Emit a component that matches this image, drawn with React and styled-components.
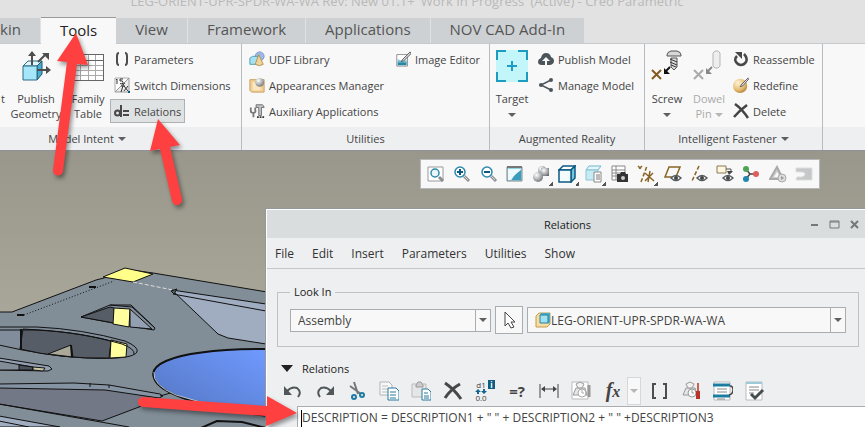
import React from "react";
import styled, { createGlobalStyle } from "styled-components";

const tabs = ["kin", "Tools", "View", "Framework", "Applications", "NOV CAD Add-In"];

const menus = ["File", "Edit", "Insert", "Parameters", "Utilities", "Show"];

const viewTools = [
  "refit",
  "zoomIn",
  "zoomOut",
  "repaint",
  "shading",
  "savedView",
  "viewManager",
  "camera",
  "datum",
  "plane",
  "axis",
  "annotation",
  "spin",
  "perspective",
  "section",
];

const withMenu = ["shading", "savedView", "viewManager", "datum"];

const editTools = ["undo", "redo", "cut", "copy", "paste", "remove", "switchDims", "evaluate", "dimension", "units"];

const lastTools = ["brackets", "unitCheck", "sort", "verify"];

const eye = (
  <g>
    <path d="M7 13q5-5 10 0q-5 5-10 0z" fill="#f8f8f8" stroke="#555b5f" strokeWidth="1.5" />
    <circle cx="12" cy="13" r="2" fill="#444" />
  </g>
);

const lens = (
  <g>
    <path d="M11 11l5 5" stroke="#8b8f92" strokeWidth="3" />
    <path d="M11 11l4 4" stroke="#d8dadb" />
    <circle cx="7" cy="7" r="5" fill="#fff" stroke="#2f8aa8" strokeWidth="1.5" />
  </g>
);

const balance = (color) => (
  <g>
    <path d="M2 14L5 7h9l2 7z" fill="#e6e7e8" stroke="#999" />
    <path d="M5 3l4-2 4 2-2 4H7z" fill="#f2f2f2" stroke="#999" />
    <circle cx="11" cy="12" r="4" fill="#fff" stroke={color} />
    <path d="M11 9v3h2" stroke={color} fill="none" />
  </g>
);

// every drawing keeps its own box, [width, height, shapes]
const icons = {
  publish: [
    32,
    32,
    <g>
      <path d="M3 16l5-5h14l-5 5z" fill="#dff6fd" stroke="#2d6d85" />
      <path d="M17 16l5-5v13l-5 6z" fill="#4aabd0" stroke="#1d566c" />
      <path d="M3 16h14v14H3z" fill="#a6e6fa" stroke="#2d6d85" />
      <path d="M12 15V5M18 12l7-7M17 20h11" stroke="#4d4d4d" strokeWidth="2" fill="none" />
      <path d="M8 6l4-5 4 5zM22 3h7v7zM26 16l5 4-5 4z" fill="#4d4d4d" />
    </g>,
  ],
  table: [
    32,
    32,
    <g shapeRendering="crispEdges">
      <path d="M1 4h30v26H1z" fill="#fff" stroke="#666" />
      <path d="M8 4v26M16 4v26M23 4v26M1 15h30M1 20h30M1 25h30" stroke="#aaa" />
      <path d="M1 4h30M1 10h30" stroke="#666" />
    </g>,
  ],
  params: [
    16,
    16,
    <path d="M5 2Q3 2 3 5v6q0 3 2 3M11 2q2 0 2 3v6q0 3-2 3" fill="none" stroke="#4d4d4d" strokeWidth="2" />,
  ],
  switch: [
    16,
    16,
    <g>
      <path d="M1 1h14L1 15z" fill="#fff" stroke="#aaa" />
      <path d="M15 1v14H1z" fill="#ececec" stroke="#999" />
      <path d="M2 3l1-1v5M9 2H6v2q3-1 3 1.500t-3 1" fill="none" stroke="#333" />
      <path d="M11 6q-2 0-2 3l-2 6M7 9h4M10 9l4 5M14 9l-4 5" fill="none" stroke="#333" />
      <path d="M14 14h2v2h-2z" fill="#0b5a83" />
    </g>,
  ],
  relations: [
    16,
    16,
    <g fill="none" stroke="#484848" strokeWidth="2">
      <circle cx="3.500" cy="10" r="2.500" />
      <path d="M7 2v12M9 8h6M9 12h6" />
    </g>,
  ],
  udf: [
    18,
    18,
    <g>
      <circle cx="12" cy="6" r="5" fill="#9fb9e8" stroke="#7590c7" />
      <path d="M1 8l3-2h7v7l-3 2H1z" fill="#a8e1ef" stroke="#3f9cb7" />
      <path d="M11 4l5 11q-4 3-9 0z" fill="#f0d49b" stroke="#b18f4c" />
    </g>,
  ],
  appearance: [
    18,
    18,
    <g>
      <path d="M1 3h16v14H3l-2-2z" fill="#f1d198" stroke="#c39a50" />
      <path d="M4 6h9v9H4z" fill="#fbe7bf" />
      <circle cx="12" cy="6" r="5" fill="url(#ball)" />
    </g>,
  ],
  auxiliary: [
    18,
    18,
    <g>
      <path d="M2 5v4q0 2 3 2t2-3V5M5 10v6" stroke="#777" strokeWidth="2" fill="none" />
      <path d="M8 2h7q2 1 2 3h-3v9h-3V5H8z" fill="#c3c6c8" stroke="#666" />
      <path d="M9 15h2v2H9zM12 15h2v2h-2zM15 15h2v2h-2z" fill="#333" />
    </g>,
  ],
  imageEditor: [
    18,
    18,
    <g>
      <path d="M2 4h12v13H2z" fill="#fff" stroke="#888" />
      <path d="M3 12q5-2 10 0v4H3z" fill="#2586a5" />
      <path d="M3 9q4 3 10 1v3H3z" fill="#7fc2d4" />
      <path d="M17 1l-8 8-2 3 3-1 8-8z" fill="#d7d7d7" stroke="#555" />
    </g>,
  ],
  target: [
    32,
    32,
    <g>
      <path d="M0 0h32v32H0z" fill="#c3f6fa" />
      <path
        d="M1 10V1h9M22 1h9v9M31 22v9h-9M10 31H1v-9M16 11v10M11 16h10"
        fill="none"
        stroke="#1b9cc0"
        strokeWidth="2"
      />
    </g>,
  ],
  cloud: [
    16,
    16,
    <g>
      <path d="M4 14q-4 0-4-3t3-4q1-5 5-5t5 4q3 1 3 4t-4 4z" fill="#4b555a" />
      <path d="M8 6l4 4H9v4H7v-4H4z" fill="#f8f8f8" />
    </g>,
  ],
  share: [
    16,
    16,
    <g fill="#4b555a">
      <path d="M13 3L3 8l10 5" fill="none" stroke="#4b555a" strokeWidth="1.5" />
      <circle cx="3" cy="8" r="2" />
      <circle cx="13" cy="3" r="2" />
      <circle cx="13" cy="13" r="2" />
    </g>,
  ],
  screw: [
    32,
    32,
    <g>
      <path d="M20 8h6v9l-3 3-3-3z" fill="#ddd" stroke="#555" />
      <path d="M19 9l7 3M19 12l7 3M20 15l5 2" stroke="#333" />
      <path d="M16 5q0-3 4-4h6q4 1 4 4v1H16z" fill="#d5d7d8" stroke="#555" />
      <path d="M1 20l9 9M10 20l-9 9" stroke="#845a22" strokeWidth="2" />
      <path d="M19 17l-4 4" stroke="#111" strokeWidth="2" />
      <path d="M13 18v6h6z" fill="#111" />
    </g>,
  ],
  dowel: [
    32,
    32,
    <g>
      <path d="M20 3l2-2h3l2 2v13l-2 2h-3l-2-2z" fill="#eee" stroke="#b5b5b5" />
      <path d="M1 20l9 9M10 20l-9 9" stroke="#aaa" strokeWidth="2" />
      <path d="M19 17l-4 4" stroke="#888" strokeWidth="2" />
      <path d="M13 18v6h6z" fill="#888" />
    </g>,
  ],
  reassemble: [
    16,
    16,
    <g>
      <path d="M4 5q-3 3-1 6 2 3 5 3t5-3q2-4-2-8" fill="none" stroke="#484848" strokeWidth="2.500" />
      <path d="M2 1h7v7z" fill="#484848" />
    </g>,
  ],
  redefine: [
    18,
    18,
    <g>
      <circle cx="8" cy="10" r="8" fill="url(#gold)" />
      <path d="M17 1l-7 7-2 3 3-1 7-8z" fill="#e3e3e3" stroke="#555" />
    </g>,
  ],
  delete: [
    16,
    16,
    <path d="M2 1q7 5 13 14M14 2Q6 8 1 14" fill="none" stroke="#444" strokeWidth="2.500" />,
  ],
  refit: [
    18,
    18,
    <g>
      <path d="M1 2h15v14H1z" fill="#fff" stroke="#999" />
      <path d="M12 12l4 4" stroke="#8b8f92" strokeWidth="3" />
      <circle cx="8" cy="8" r="4" fill="#e9f7fb" stroke="#2f8aa8" strokeWidth="1.500" />
    </g>,
  ],
  zoomIn: [18, 18, <g>{lens}<path d="M4 7h6M7 4v6" stroke="#0b5a83" strokeWidth="2" /></g>],
  zoomOut: [18, 18, <g>{lens}<path d="M4 7h6" stroke="#0b5a83" strokeWidth="2" /></g>],
  repaint: [
    18,
    18,
    <g>
      <path d="M1 2h15v14H1z" fill="#8fd5e6" stroke="#888" />
      <path d="M1 2h15" stroke="#777" strokeWidth="2" />
      <path d="M2 15V4h13q-2 8-11 11z" fill="#eefafd" />
      <path d="M6 14q2-4 9-9v10H6z" fill="#3a9dbb" />
    </g>,
  ],
  shading: [
    18,
    18,
    <g>
      <circle cx="10" cy="5" r="4" fill="url(#ball)" />
      <path d="M9 3h8v8H9z" fill="url(#ball)" />
      <circle cx="6" cy="12" r="5" fill="url(#ball)" />
    </g>,
  ],
  savedView: [
    18,
    18,
    <g stroke="#0b5a83" strokeWidth="1.500">
      <path d="M1 5l4-4h12l-4 4z" fill="#fff" />
      <path d="M13 5l4-4v12l-4 4z" fill="#75c5dc" />
      <path d="M1 5h12v12H1z" fill="#f2fcff" />
    </g>,
  ],
  viewManager: [
    18,
    18,
    <g>
      <path d="M1 5l3-4h12l-3 4z" fill="#e5f7fb" stroke="#70b6cc" />
      <path d="M1 5h12v10H1z" fill="#c5ebf5" stroke="#8cc4d6" />
      <path d="M9 7h7v10H9z" fill="#fff" stroke="#888" />
      <path d="M11 10h4M11 12h4M11 14h4" stroke="#777" />
    </g>,
  ],
  camera: [
    18,
    18,
    <g>
      <path d="M1 1h13v14H1z" fill="#fff" stroke="#888" />
      <path d="M1 5h13M1 8h13M1 11h13M5 1v14" stroke="#888" />
      <path d="M6 9h3l1-2h4l1 2h2v8H6z" fill="#333" />
      <circle cx="12" cy="13" r="2" fill="#ccc" />
    </g>,
  ],
  datum: [
    18,
    18,
    <g stroke="#8a6426" strokeWidth="1.500" fill="none">
      <path d="M1 1l4 4M5 1L1 5M4 17l6-16" strokeDasharray="4 2" />
      <path d="M8 8l9 8M16 8l-8 8M13 6l-2 11" />
    </g>,
  ],
  plane: [18, 18, <g><path d="M5 2h11l-4 10H1z" fill="none" stroke="#8a6426" strokeWidth="1.500" />{eye}</g>],
  axis: [18, 18, <g><path d="M9 1L2 16" stroke="#8a6426" strokeWidth="1.500" strokeDasharray="4 2" />{eye}</g>],
  annotation: [
    18,
    18,
    <g>
      <path d="M1 1h9v7H1z" fill="#fff7df" stroke="#8a7a55" />
      <path d="M10 4h5v4" fill="none" stroke="#555" />
      <path d="M11 6h6l-4 4z" fill="#444" />
      {eye}
    </g>,
  ],
  spin: [
    18,
    18,
    <g>
      <path d="M3 3l5 6-5 6M8 9h6" fill="none" stroke="#444" strokeWidth="1.500" />
      <circle cx="4" cy="4" r="3" fill="#4da456" />
      <circle cx="4" cy="14" r="3" fill="#2186ae" />
      <circle cx="14" cy="9" r="3" fill="#e05d5d" />
    </g>,
  ],
  perspective: [
    18,
    18,
    <g>
      <path d="M8 2L1 14h13z" fill="#ccc" stroke="#aaa" strokeWidth="2" />
      <path d="M8 7l-3 5h6z" fill="#f8f8f8" />
      <circle cx="13" cy="13" r="4" fill="#ddd" stroke="#aaa" />
      <path d="M12 11l3 2-3 2z" fill="#999" />
    </g>,
  ],
  section: [18, 18, <path d="M1 3h16v12H1l1-3h5q3-1 3-3T7 7H1z" fill="#c5c7c8" stroke="#ddd" />],
  arrow: [16, 20, <path d="M4 2v14l3-3 3 5 3-1-3-5h4z" fill="#fff" stroke="#444" />],
  part: [
    16,
    16,
    <g>
      <path d="M1 4l3-3h11v11l-3 3H1z" fill="#f7dda5" stroke="#c79b46" />
      <path d="M5 3l1-2h9v9l-1 2z" fill="#4aa9c6" />
      <path d="M5 3h8v8H5z" fill="#9fe0f2" stroke="#28819b" />
    </g>,
  ],
  undo: [20, 20, <g><path d="M4 10q5-5 10-3 5 4 1 9" fill="none" stroke="#50575b" strokeWidth="2" /><path d="M1 5v9h8z" fill="#50575b" /></g>],
  redo: [20, 20, <g><path d="M16 10Q11 5 6 7q-5 4-1 9" fill="none" stroke="#50575b" strokeWidth="2" /><path d="M19 5v9h-8z" fill="#50575b" /></g>],
  cut: [
    20,
    20,
    <g fill="none">
      <path d="M7 1l4 12M3 5l11 8" stroke="#777" strokeWidth="2" />
      <circle cx="7" cy="16" r="2" stroke="#217ca4" strokeWidth="2" />
      <circle cx="15" cy="14" r="2" stroke="#217ca4" strokeWidth="2" />
    </g>,
  ],
  copy: [
    20,
    20,
    <g>
      <path d="M1 1h9l3 3v10H1z" fill="#f8f8f8" stroke="#b1b4b6" />
      <path d="M3 5h6M3 8h6M3 11h6" stroke="#bbb" />
      <path d="M9 7h8l3 3v9H9z" fill="#fff" stroke="#267b9c" />
      <path d="M11 11h6M11 14h6M11 17h6" stroke="#267b9c" />
    </g>,
  ],
  paste: [
    20,
    20,
    <g>
      <path d="M1 3h14v13H1z" fill="#e5e6e7" stroke="#bbb" />
      <path d="M5 4l2-3h3l2 3v2H5z" fill="#ccc" stroke="#999" />
      <path d="M11 8h6l3 3v8h-9z" fill="#fff" stroke="#267b9c" />
      <path d="M13 12h4M13 15h5M13 17h5" stroke="#267b9c" />
    </g>,
  ],
  remove: [20, 20, <path d="M2 2q9 6 16 16M17 3Q8 8 2 17" fill="none" stroke="#484848" strokeWidth="3" />],
  dimension: [20, 20, <g><path d="M1 3v14M19 3v14M3 8h14" stroke="#444" /><path d="M2 8l4-3v6zM18 8l-4-3v6z" fill="#444" /></g>],
  units: [20, 20, <g><path d="M1 1h16v17H1z" fill="#fff" stroke="#bbb" />{balance("#aaa")}<path d="M18 4v12" stroke="#999" strokeWidth="3" /></g>],
  unitCheck: [20, 20, <g>{balance("#999")}<path d="M17 2v10" stroke="#c86055" strokeWidth="2" /><path d="M17 10v8" stroke="#b8342b" strokeWidth="4" /></g>],
  brackets: [20, 20, <path d="M7 3H4v14h3M14 3h3v14h-3" fill="none" stroke="#4d4d4d" strokeWidth="2" />],
  sort: [
    20,
    20,
    <g>
      <path d="M1 1h16v18H1z" fill="#fff" stroke="#bbb" />
      <path d="M0 4h17M0 15h17" stroke="#1b7ca2" strokeWidth="3" />
      <path d="M4 8h10M4 11h10M4 18h8" stroke="#888" />
      <path d="M17 5q3 0 3 4t-4 5" fill="none" stroke="#444" strokeWidth="1.500" />
    </g>,
  ],
  verify: [
    20,
    20,
    <g>
      <path d="M1 1h16v18H1z" fill="#fff" stroke="#bbb" />
      <path d="M1 2h16" stroke="#9ccbd9" strokeWidth="2" />
      <path d="M4 6h10M4 9h10M4 12h5" stroke="#888" />
      <path d="M6 13l4 4 8-8" fill="none" stroke="#454d51" strokeWidth="3" />
    </g>,
  ],
};

const Icon = ({ name }) => {
  const [w, h, shapes] = icons[name];
  return (
    <IconSvg width={w} height={h} viewBox={`0 0 ${w} ${h}`} aria-hidden="true">
      {shapes}
    </IconSvg>
  );
};

const Down = () => (
  <IconSvg width="8" height="4" viewBox="0 0 8 4" aria-hidden="true">
    <path d="M0 0h8L4 4z" fill="currentColor" opacity="0.85" />
  </IconSvg>
);

const Tool = ({ icon, label, active }) => (
  <SmallButton $active={active}>
    <Icon name={icon} />
    {label}
  </SmallButton>
);

const EditTool = ({ name }) => {
  if (name === "switchDims")
    return (
      <EditButton aria-label={name}>
        <DimsGlyph>
          <span>d1</span>
          <InfoMark>i</InfoMark>
          <DimsArrows viewBox="0 0 12 5" aria-hidden="true">
            <path d="M0 3h6L3 0zM2 3h2v2H2zM6 2h6L9 5zM8 0h2v2H8z" fill="#14658c" />
          </DimsArrows>
          <span>0.0</span>
        </DimsGlyph>
      </EditButton>
    );
  if (name === "evaluate") return <EditButton $bold>=?</EditButton>;
  return (
    <EditButton aria-label={name}>
      <Icon name={name} />
    </EditButton>
  );
};

const Model = () => (
  <ModelSvg viewBox="0 0 266 277" width="266" height="277" aria-hidden="true">
    <defs>
      <linearGradient id="dome" x1="0" y1="1" x2="1" y2="0">
        <stop offset="0" stopColor="#5374be" />
        <stop offset="1" stopColor="#6f9aff" />
      </linearGradient>
      <radialGradient id="ball" cx="0.35" cy="0.3" r="0.8">
        <stop offset="0" stopColor="#fff" />
        <stop offset="0.5" stopColor="#b5b7b9" />
        <stop offset="1" stopColor="#6b6e70" />
      </radialGradient>
      <radialGradient id="gold" cx="0.35" cy="0.3" r="0.8">
        <stop offset="0" stopColor="#fff3d6" />
        <stop offset="0.6" stopColor="#e6bd74" />
        <stop offset="1" stopColor="#a97a2c" />
      </radialGradient>
    </defs>
    <g transform="translate(0 -150)" stroke="#111" strokeLinejoin="round">
      <path d="M-1 312h13l84-32 8-2 20-9 29 4 114 19v140H-1z" fill="#818d97" />
      <path d="M103 277l22-9 28 6-20 8z" fill="#ffff8a" />
      <path d="M24 315l90-34" fill="none" strokeDasharray="1 2" />
      <path d="M17 315h7M89 287h7" strokeWidth="2" />
      <path d="M133 282l40 8" stroke="#ddd" strokeDasharray="4 2" />
      <path d="M172 290l94 14v40l-38-6-10-4z" fill="#a0adc0" />
      <path d="M173 294l93 17M171 291l6-2-3 5z" fill="#566" />
      <path d="M81 317l29-12h21l24 23-1 2-25-4z" fill="#818d9a" />
      <path d="M81 317l29-10 4 1v15z" fill="#575d67" />
      <path d="M114 308l16 1-1 18-16-3z" fill="#ffffa0" />
      <path d="M130 309l22 20-22-2z" fill="#93a0b2" />
      <path d="M110 305l22 2 23 21" fill="none" />
      <path d="M-1 327h38q45 2 88 14 14 6 12 11-4 8-51 6-40-2-87-13z" fill="#818d9a" />
      <path d="M23 329q50 2 88 12l-2 17q-48 1-89-9z" fill="#575d67" />
      <path d="M111 340l16 4-1 13-16 1z" fill="#ffff9e" />
      <path d="M48 354l23-9 2 12z" fill="#aaa899" />
      <path d="M-1 330h38q45 2 85 14 13 5 12 10" fill="none" />
      <path d="M71 345l1 12M21 329v20" strokeWidth="2" />
      <path d="M-1 358l50 8 3 3-4 2-49-1z" fill="#95a1b3" />
      <path d="M-1 361l34 6v3H-1z" fill="#818d97" />
      <path d="M19 365l14 2v3H19z" fill="#4a515b" />
      <path d="M33 367l12 1-2 3-10-1z" fill="#cbc9a7" />
      <path d="M-1 386l91-1 69 12-20 10-37 14-103-17z" fill="#737887" />
      <path d="M-1 384l75-1 35 2 51 9 3 2-4 2-54-8-106-2z" fill="#8593a3" />
      <path d="M90 383v4M109 385v3M160 396l14-4" fill="none" />
      <path d="M-1 404l130 23" fill="none" />
      <path d="M-1 416l61 11H-1z" fill="#a0adc0" />
      <path d="M-1 421l30 6" fill="none" />
      <path d="M267 349q-73 0-101 12-16 7-12 17 7 23 113 38z" fill="url(#dome)" strokeWidth="2" />
      <path d="M154 372q-2 13 22 23l28 8" fill="none" stroke="#bbc2cc" />
      <path d="M201 428l16-7 25 1 24 6" fill="#818d97" strokeWidth="2" />
    </g>
  </ModelSvg>
);

const Callouts = () => (
  <CalloutSvg aria-hidden="true">
    <g fill="#ff4040">
      <path d="M76 33L57 61l10 1-14 108a5 5 0 0 0 10 1L77 64l11 1z" />
      <path d="M158 119l-8 32 10-2 12 52a5 5 0 0 0 10-2l-12-52 10-2z" />
      <path d="M297 413l-30-17v10L143 397a5 5 0 0 0 0 10l123 9v10z" />
    </g>
  </CalloutSvg>
);

const App = () => {
  return (
    <>
      <GlobalStyle />
      <Page>
        <TitleBar>LEG-ORIENT-UPR-SPDR-WA-WA Rev: New 01.1+ 'Work In Progress' (Active) - Creo Parametric</TitleBar>
        <TabBar>
          {tabs.map((tab) => (
            <Tab key={tab} $active={tab === "Tools"} $cut={tab === "kin"}>
              {tab}
            </Tab>
          ))}
        </TabBar>
        <Ribbon>
          <Group $width={309} $scrolled>
            <GroupBody $end>
              <BigButton $width={6}>
                <IconGap />t
              </BigButton>
              <BigButton $width={60}>
                <Icon name="publish" />
                Publish
                <br />
                Geometry
              </BigButton>
              <BigButton>
                <Icon name="table" />
                Family
                <br />
                Table
              </BigButton>
              <ToolColumn $width={131}>
                <Tool icon="params" label="Parameters" />
                <Tool icon="switch" label="Switch Dimensions" />
                <Tool icon="relations" label="Relations" active />
              </ToolColumn>
            </GroupBody>
            <GroupLabel>
              Model Intent <Down />
            </GroupLabel>
          </Group>
          <Group $width={248}>
            <GroupBody $inset>
              <ToolColumn $width={146}>
                <Tool icon="udf" label="UDF Library" />
                <Tool icon="appearance" label="Appearances Manager" />
                <Tool icon="auxiliary" label="Auxiliary Applications" />
              </ToolColumn>
              <ToolColumn>
                <Tool icon="imageEditor" label="Image Editor" />
              </ToolColumn>
            </GroupBody>
            <GroupLabel>Utilities</GroupLabel>
          </Group>
          <Group $width={155}>
            <GroupBody>
              <BigButton>
                <Icon name="target" />
                Target
                <br />
                <Down />
              </BigButton>
              <ToolColumn>
                <Tool icon="cloud" label="Publish Model" />
                <Tool icon="share" label="Manage Model" />
              </ToolColumn>
            </GroupBody>
            <GroupLabel>Augmented Reality</GroupLabel>
          </Group>
          <Group $width={178}>
            <GroupBody>
              <BigButton>
                <Icon name="screw" />
                Screw
                <br />
                <Down />
              </BigButton>
              <BigButton $width={40} disabled>
                <Icon name="dowel" />
                Dowel
                <br />
                Pin <Down />
              </BigButton>
              <ToolColumn>
                <Tool icon="reassemble" label="Reassemble" />
                <Tool icon="redefine" label="Redefine" />
                <Tool icon="delete" label="Delete" />
              </ToolColumn>
            </GroupBody>
            <GroupLabel>
              Intelligent Fastener <Down />
            </GroupLabel>
          </Group>
          <RibbonRest />
        </Ribbon>
        <Viewport>
          <Model />
          <ViewBar>
            {viewTools.map((name) => (
              <ViewButton key={name} aria-label={name} $menu={withMenu.includes(name)}>
                <Icon name={name} />
              </ViewButton>
            ))}
          </ViewBar>
          <Dialog>
            <DialogTitle>
              <DialogName>Relations</DialogName>
              <WindowButton aria-label="Minimize">
                <IconSvg width="9" height="9" viewBox="0 0 9 9">
                  <path d="M1 5h7" stroke="#777" strokeWidth="2" />
                </IconSvg>
              </WindowButton>
              <WindowButton aria-label="Maximize">
                <IconSvg width="11" height="9" viewBox="0 0 11 9">
                  <path d="M1 1h9v7H1zM1 2h9" fill="none" stroke="#777" />
                </IconSvg>
              </WindowButton>
              <WindowButton aria-label="Close">
                <IconSvg width="9" height="9" viewBox="0 0 9 9">
                  <path d="M1 1l7 7M8 1L1 8" stroke="#777" strokeWidth="2" />
                </IconSvg>
              </WindowButton>
            </DialogTitle>
            <MenuBar>
              {menus.map((menu) => (
                <MenuButton key={menu}>{menu}</MenuButton>
              ))}
            </MenuBar>
            <LookIn>
              <legend>Look In</legend>
              <Controls>
                <SelectBox $kind>
                  <Select aria-label="Look in">
                    <option>Assembly</option>
                  </Select>
                  <SelectArrow>
                    <Down />
                  </SelectArrow>
                </SelectBox>
                <PickButton aria-label="Select">
                  <Icon name="arrow" />
                </PickButton>
                <SelectBox $tall>
                  <PartMark>
                    <Icon name="part" />
                  </PartMark>
                  <Select aria-label="Model" $inset>
                    <option>LEG-ORIENT-UPR-SPDR-WA-WA</option>
                  </Select>
                  <SelectArrow>
                    <Down />
                  </SelectArrow>
                </SelectBox>
              </Controls>
            </LookIn>
            <SectionToggle>
              <IconSvg width="12" height="7" viewBox="0 0 12 7">
                <path d="M0 0h12L6 7z" fill="#222" />
              </IconSvg>
              Relations
            </SectionToggle>
            <EditBar>
              {editTools.map((name) => (
                <EditTool key={name} name={name} />
              ))}
              <SplitButton>
                <EditButton $math>
                  f<small>x</small>
                </EditButton>
                <SplitArrow aria-label="Functions">
                  <Down />
                </SplitArrow>
              </SplitButton>
              {lastTools.map((name) => (
                <EditTool key={name} name={name} />
              ))}
            </EditBar>
            <Editor>
              <Caret />
              <EditorText
                aria-label="Relations text"
                rows={1}
                defaultValue={'DESCRIPTION = DESCRIPTION1 + " " + DESCRIPTION2 + " " +DESCRIPTION3'}
              />
            </Editor>
          </Dialog>
        </Viewport>
        <Callouts />
      </Page>
    </>
  );
};

export default App;

const GlobalStyle = createGlobalStyle`
  * {
    box-sizing: border-box;
  }

  body {
    margin: 0;
    overflow: hidden;
    background: #e2e2e2;
  }

  body, button, select, textarea {
    font-family: "Open Sans", "Noto Sans", sans-serif;
    font-size: 12px;
    line-height: 15px;
    color: #444;
  }

  button {
    border: 0;
    padding: 0;
    background: none;
  }
`;

const Page = styled.div`
  position: relative;
  height: 100vh;
  display: flex;
  flex-direction: column;
  overflow: hidden;
`;

const IconSvg = styled.svg`
  display: block;
  flex: none;
`;

const TitleBar = styled.header`
  height: 17px;
  flex: none;
  display: flex;
  align-items: flex-end;
  justify-content: center;
  padding: 0 51px 8px 0;
  font-size: 13px;
  white-space: nowrap;
  color: #b9b9b9;
`;

const TabBar = styled.nav`
  display: flex;
  align-items: flex-end;
  height: 27px;
  flex: none;
  border-bottom: 1px solid #c6cacc;
`;

const Tab = styled.button`
  height: ${(props) => (props.$active ? 27 : 25)}px;
  margin-bottom: ${(props) => (props.$active ? -1 : 0)}px;
  padding: ${(props) => (props.$cut ? "0 19px 2px 0" : "0 19px 2px")};
  border-top: ${(props) => (props.$active ? "1px solid #999" : 0)};
  border-right: ${(props) => (props.$active ? 0 : "1px solid #e2e2e2")};
  background: ${(props) => (props.$active ? "#f8f8f8" : "#cdd1d3")};
  color: ${(props) => (props.$active ? "#222" : "#555")};
  font-size: 15px;
  white-space: nowrap;
`;

const Ribbon = styled.section`
  display: flex;
  height: 106px;
  flex: none;
  overflow: hidden;
  background: #f8f8f8;
  font-size: 11px;

  button {
    font-size: 11px;
  }
`;

const Group = styled.div`
  width: ${(props) => props.$width}px;
  margin-left: ${(props) => (props.$scrolled ? -67 : 0)}px;
  flex: none;
  display: flex;
  flex-direction: column;
  border-right: 1px solid #b8bcbe;
`;

const GroupBody = styled.div`
  height: 83px;
  display: flex;
  justify-content: ${(props) => (props.$end ? "flex-end" : "flex-start")};
  padding-left: ${(props) => (props.$inset ? 3 : 0)}px;
`;

const GroupLabel = styled.div`
  flex: 1;
  display: flex;
  align-items: center;
  justify-content: center;
  gap: 4px;
  background: #edeff1;
`;

const RibbonRest = styled.div`
  flex: 1;
  background: linear-gradient(#f8f8f8 83px, #edeff1 83px);
`;

const BigButton = styled.button`
  width: ${(props) => props.$width || 44}px;
  flex: none;
  white-space: nowrap;
  align-self: flex-start;
  padding-top: 6px;
  color: #444;

  &:disabled {
    color: #aaa;
  }

  > svg {
    display: inline-block;
    vertical-align: middle;
  }

  > svg:first-child {
    display: block;
    margin: 0 auto 9px;
  }
`;

const IconGap = styled.div`
  height: 41px;
`;

const ToolColumn = styled.div`
  width: ${(props) => (props.$width ? `${props.$width}px` : "auto")};
  display: flex;
  flex-direction: column;
  align-items: flex-start;
  gap: 2px;
  padding-top: 3px;
`;

const SmallButton = styled.button`
  height: 24px;
  display: flex;
  align-items: center;
  gap: 4px;
  padding: 0 3px;
  white-space: nowrap;
  border: 1px solid ${(props) => (props.$active ? "#adb1b3" : "transparent")};
  background: ${(props) => (props.$active ? "#dfe2e3" : "transparent")};

  svg {
    width: 16px;
    height: 16px;
  }
`;

const Viewport = styled.main`
  position: relative;
  flex: 1;
  min-height: 0;
  display: flex;
  flex-direction: column;
  padding-top: 8px;
  border-top: 1px solid #90949a;
  background: linear-gradient(#99978b, #a9a799 60%, #b5b3a5);
`;

const ModelSvg = styled.svg`
  position: absolute;
  left: 0;
  bottom: 0;
`;

const ViewBar = styled.div`
  width: 400px;
  height: 30px;
  flex: none;
  align-self: flex-end;
  margin-right: 45px;
  display: flex;
  align-items: center;
  justify-content: space-between;
  padding: 0 3px;
  border: 1px solid #b5b7b9;
  background: #f8f8f8;
`;

const ViewButton = styled.button`
  width: 24px;
  height: 24px;
  display: flex;
  align-items: center;
  justify-content: center;
  background: ${(props) =>
    props.$menu ? "linear-gradient(135deg, transparent 50%, #555 50%) right bottom / 4px 4px no-repeat" : "none"};
`;

const Dialog = styled.section`
  position: relative;
  flex: 1;
  min-height: 0;
  display: flex;
  flex-direction: column;
  margin: 19px 0 0 265px;
  border: solid #94989b;
  border-width: 1px 0 0 1px;
  box-shadow: inset 1px 1px #fff;
  padding: 1px 0 0 1px;
  background: #eeeff1;
`;

const DialogTitle = styled.header`
  height: 28px;
  flex: none;
  display: flex;
  align-items: center;
  padding-right: 1px;
  background: #d9dddd;
`;

const DialogName = styled.h1`
  flex: 1;
  margin: 0;
  padding-left: 64px;
  font-size: 11px;
  font-weight: 400;
  text-align: center;
  color: #222;
`;

const WindowButton = styled.button`
  width: 20px;
  height: 20px;
  display: flex;
  align-items: center;
  justify-content: center;
`;

const MenuBar = styled.nav`
  height: 31px;
  flex: none;
  display: flex;
  align-items: center;
  gap: 18px;
  padding-left: 8px;
  border-bottom: 1px solid #c4c7c9;
`;

const MenuButton = styled.button`
  color: #333;
`;

const LookIn = styled.fieldset`
  min-width: 0;
  margin: 15px 6px 0 10px;
  padding: 6px 12px 12px;
  border: 1px solid #c0c3c5;

  legend {
    padding: 0 4px;
    font-size: 11px;
    line-height: 16px;
    color: #222;
  }
`;

const Controls = styled.div`
  display: flex;
  align-items: center;
  gap: 4px;
`;

const SelectBox = styled.div`
  width: ${(props) => (props.$kind ? "201px" : "auto")};
  height: ${(props) => (props.$tall ? 26 : 23)}px;
  flex: ${(props) => (props.$kind ? "none" : 1)};
  min-width: 0;
  display: grid;
  grid-template-columns: 1fr 15px;
  border: 1px solid #a9adaf;
  background: #f8f8f8;
`;

const Select = styled.select`
  grid-area: 1 / 1 / 2 / 3;
  min-width: 0;
  appearance: none;
  border: 0;
  background: none;
  padding: ${(props) => (props.$inset ? "0 16px 0 23px" : "0 16px 0 7px")};
`;

const SelectArrow = styled.span`
  grid-area: 1 / 2;
  display: flex;
  align-items: center;
  justify-content: center;
  border-left: 1px solid #a9adaf;
  pointer-events: none;
`;

const PartMark = styled.span`
  grid-area: 1 / 1;
  display: flex;
  align-items: center;
  padding-left: 7px;
`;

const PickButton = styled.button`
  width: 28px;
  height: 28px;
  flex: none;
  display: flex;
  align-items: center;
  justify-content: center;
  border: 1px solid #a9adaf;
  background: #f8f8f8;
`;

const SectionToggle = styled.button`
  flex: none;
  align-self: flex-start;
  display: flex;
  align-items: center;
  gap: 9px;
  margin: 14px 0 0 14px;
  font-size: 11px;
  color: #222;
`;

const EditBar = styled.div`
  height: 30px;
  flex: none;
  display: flex;
  align-items: center;
  gap: 4px;
  padding-left: 12px;
`;

const EditButton = styled.button`
  width: 28px;
  height: 28px;
  flex: none;
  display: flex;
  align-items: ${(props) => (props.$math ? "baseline" : "center")};
  justify-content: center;
  font-family: ${(props) => (props.$math ? '"Liberation Serif", serif' : '"Open Sans", sans-serif')};
  font-size: ${(props) => (props.$math ? 20 : 15)}px;
  font-style: ${(props) => (props.$math ? "italic" : "normal")};
  font-weight: ${(props) => (props.$bold || props.$math ? 700 : 400)};
  line-height: ${(props) => (props.$math ? 26 : 15)}px;

  small {
    font-size: 16px;
  }
`;

const DimsGlyph = styled.span`
  display: grid;
  grid-template: 9px 4px 9px / 12px 7px;
  column-gap: 1px;
  font-size: 8px;
  line-height: 9px;
`;

const DimsArrows = styled.svg`
  grid-column: 1 / 3;
  width: 12px;
  height: 5px;
`;

const InfoMark = styled.span`
  background: #0f5b82;
  color: #fff;
  font-weight: 700;
  text-align: center;
`;

const SplitButton = styled.div`
  display: flex;
  align-items: center;
`;

const SplitArrow = styled.button`
  width: 14px;
  height: 28px;
  display: flex;
  align-items: center;
  justify-content: center;
  border: 1px solid #d5d7d9;
  background: #f8f8f8;
  color: #aaa;
`;

const Editor = styled.div`
  flex: 1;
  min-height: 0;
  display: flex;
  margin-left: 30px;
  padding: 3px 0 0 3px;
  border: solid #a9adaf;
  border-width: 1px 0 0 1px;
  background: #fff;
`;

const Caret = styled.span`
  width: 1px;
  background: #000;
`;

const EditorText = styled.textarea`
  flex: 1;
  border: 0;
  padding: 0;
  resize: none;
  outline: 0;
  overflow: hidden;
  background: none;
`;

const CalloutSvg = styled.svg`
  position: absolute;
  inset: 0;
  width: 100%;
  height: 100%;
  pointer-events: none;
  filter: drop-shadow(2px 3px 2px rgba(0, 0, 0, 0.4));
`;
